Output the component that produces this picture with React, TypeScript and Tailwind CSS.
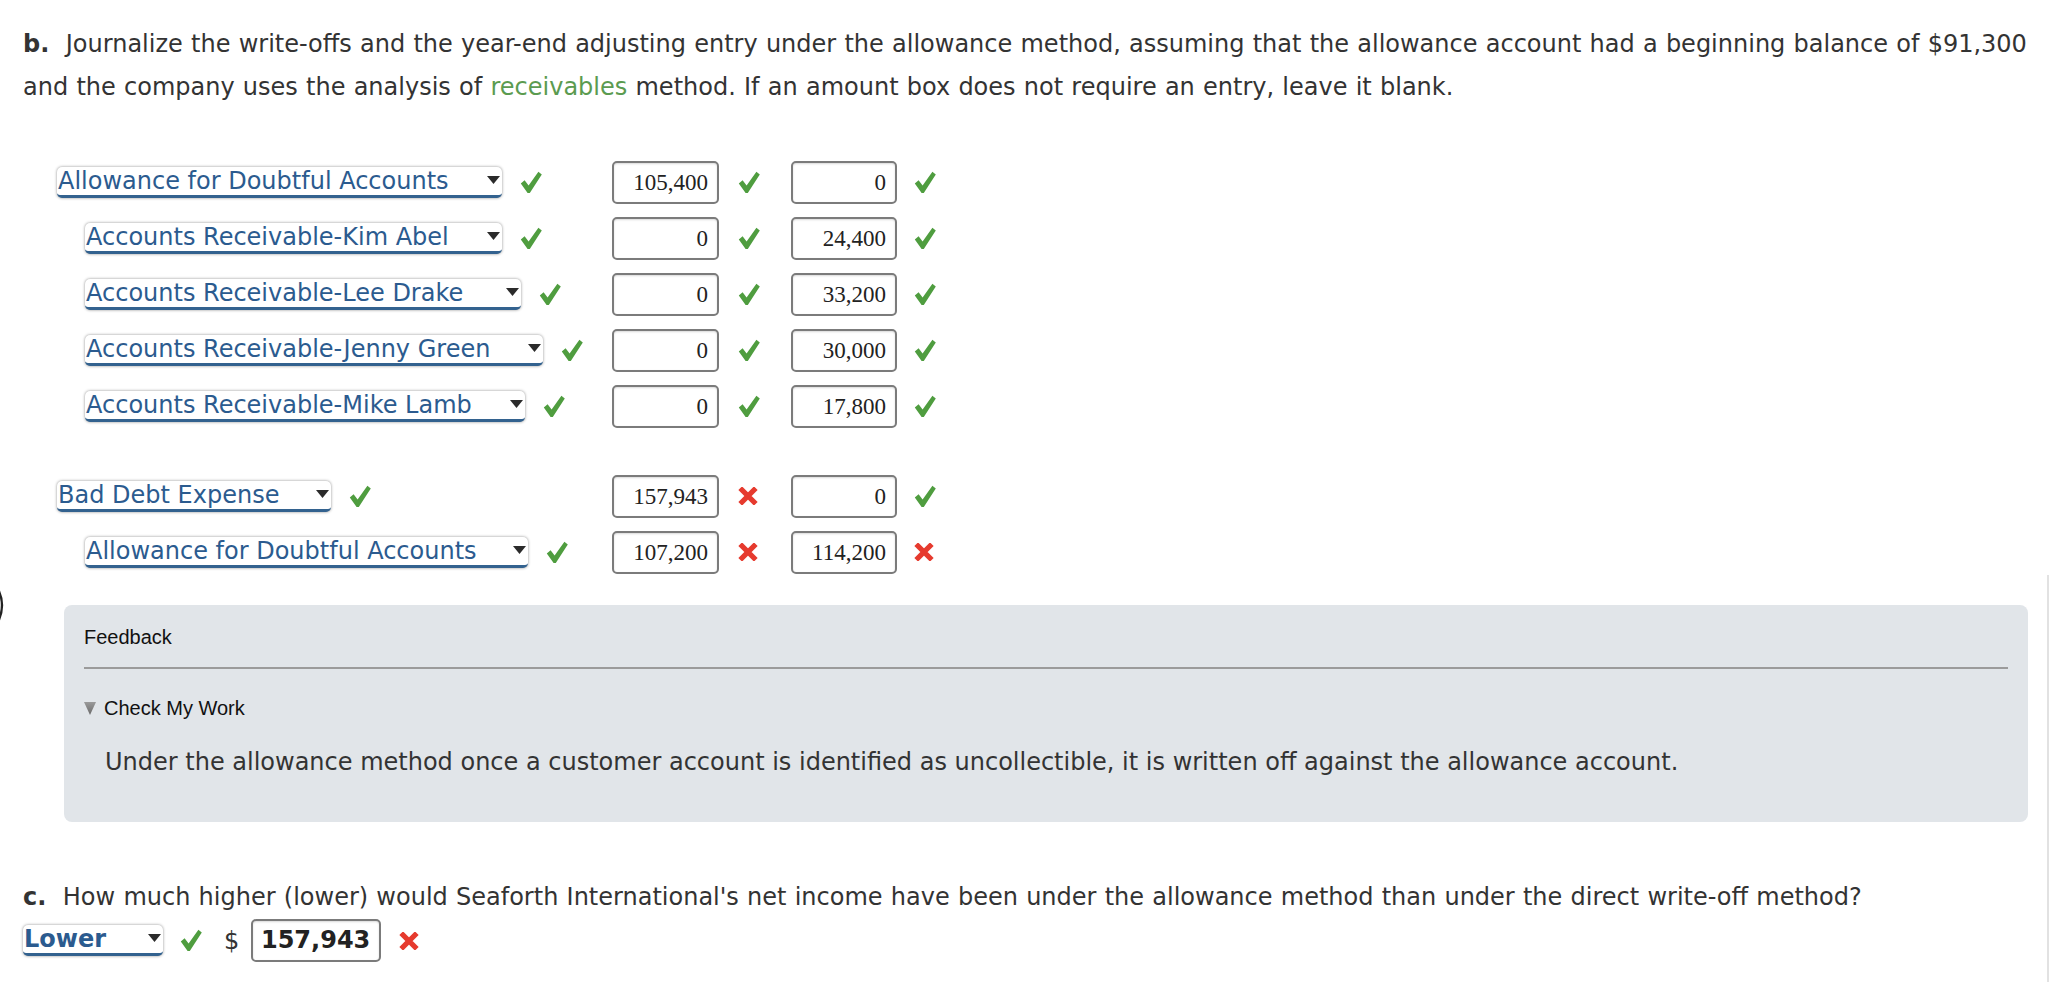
import React from "react";

function Check() {
  return (
    <svg width="22" height="23" viewBox="0 0 22 23" className="shrink-0">
      <path d="M0.8 12.6 L4.6 9.2 L8.6 14.4 L18.4 0.8 L21.8 3.6 L9.8 22 L7.6 22 Z" fill="#4f9d3f" />
    </svg>
  );
}

function Cross() {
  return (
    <svg width="20" height="18" viewBox="0 0 20 18" className="shrink-0">
      <path d="M2.2 1.2 L17.8 16.8 M17.8 1.2 L2.2 16.8" stroke="#e63a2e" strokeWidth="5.2" strokeLinecap="butt" />
    </svg>
  );
}

function Arrow() {
  return (
    <svg width="13" height="8" viewBox="0 0 13 8" className="absolute right-[2px] top-[9px]">
      <path d="M0 0 L13 0 L6.5 8 Z" fill="#2b2b2b" />
    </svg>
  );
}

function Select({ label, cls, bold }: { label: string; cls: string; bold?: boolean }) {
  return (
    <div
      className={
        "relative h-[31px] bg-white rounded-[5px] shadow-[0_0_3px_rgba(0,0,0,0.45)] border-b-[3px] border-[#33628f] text-[24px] leading-[29px] text-[#2b5b8f] whitespace-nowrap overflow-hidden " +
        cls +
        (bold ? " font-bold" : "")
      }
    >
      <span className="pl-[1px]">{label}</span>
      <Arrow />
    </div>
  );
}

function Box({ v, cls }: { v: string; cls?: string }) {
  return (
    <div
      className={
        "h-[43px] border-2 border-[#7b7b7b] rounded-[5px] bg-white shadow-[inset_0_1px_2px_rgba(0,0,0,0.15)] text-right pr-[9px] leading-[39px] text-[#222] " +
        (cls ?? "")
      }
    >
      {v}
    </div>
  );
}

type RowT = {
  label: string;
  cls: string;
  indent: boolean;
  d: string;
  dOk: boolean;
  c: string;
  cOk: boolean;
  extra?: string;
};

const rows: RowT[] = [
  { label: "Allowance for Doubtful Accounts", cls: "w-[445px]", indent: false, d: "105,400", dOk: true, c: "0", cOk: true },
  { label: "Accounts Receivable-Kim Abel", cls: "w-[417px]", indent: true, d: "0", dOk: true, c: "24,400", cOk: true },
  { label: "Accounts Receivable-Lee Drake", cls: "w-[436px]", indent: true, d: "0", dOk: true, c: "33,200", cOk: true },
  { label: "Accounts Receivable-Jenny Green", cls: "w-[458px]", indent: true, d: "0", dOk: true, c: "30,000", cOk: true },
  { label: "Accounts Receivable-Mike Lamb", cls: "w-[440px]", indent: true, d: "0", dOk: true, c: "17,800", cOk: true },
  { label: "Bad Debt Expense", cls: "w-[274px]", indent: false, d: "157,943", dOk: false, c: "0", cOk: true, extra: "mt-[34px]" },
  { label: "Allowance for Doubtful Accounts", cls: "w-[443px]", indent: true, d: "107,200", dOk: false, c: "114,200", cOk: false },
];

export default function App() {
  return (
    <div className="relative w-[2052px] h-[982px] bg-white overflow-hidden font-['DejaVu_Sans',Verdana,sans-serif] text-[#333]">
      <svg width="8" height="36" viewBox="0 0 8 36" className="absolute left-0 top-[588px]">
        <path d="M-2 1 Q6 17 -2 34" stroke="#222" strokeWidth="2.4" fill="none" />
      </svg>
      <div className="absolute right-[3px] top-[575px] w-[2px] h-[407px] bg-[#e2e2e2]" />

      <div className="pl-[23px] pt-[23px]">
        <p className="text-[24px] leading-[43px] whitespace-nowrap [word-spacing:0.6px]">
          <b className="text-[#333]">b.</b>&nbsp; Journalize the write-offs and the year-end adjusting entry under the allowance method, assuming that the allowance account had a beginning balance of $91,300
          <br />
          and the company uses the analysis of <span className="text-[#5b9b50]">receivables</span> method. If an amount box does not require an entry, leave it blank.
        </p>

        <div className="mt-[45px] ml-[34px]">
          {rows.map((r, i) => (
            <div key={i} className={"flex items-center h-[56px] " + (r.extra ?? "")}>
              <div className={"w-[555px] flex items-center gap-[18px] " + (r.indent ? "pl-[28px]" : "")}>
                <Select label={r.label} cls={r.cls} />
                <Check />
              </div>
              <Box v={r.d} cls="w-[107px] font-['Liberation_Serif',serif] text-[23px]" />
              <div className="w-[72px] pl-[19px] flex items-center">{r.dOk ? <Check /> : <Cross />}</div>
              <Box v={r.c} cls="w-[106px] font-['Liberation_Serif',serif] text-[23px]" />
              <div className="pl-[17px] flex items-center">{r.cOk ? <Check /> : <Cross />}</div>
            </div>
          ))}
        </div>

        <div className="mt-[25px] ml-[41px] w-[1964px] h-[217px] bg-[#e1e5e9] rounded-[8px] pt-[20px] px-[20px]">
          <div className="font-['Liberation_Sans',Arial,sans-serif] text-[20px] leading-[24px] text-[#111]">Feedback</div>
          <div className="mt-[18px] h-[2px] bg-[#9b9b9b]" />
          <div className="mt-[27px] flex items-center h-[24px] font-['Liberation_Sans',Arial,sans-serif] text-[20px] leading-[24px] text-[#111]">
            <svg width="13" height="14" viewBox="0 0 13 14" className="mr-[7px]">
              <defs>
                <linearGradient id="tg" x1="0" y1="0" x2="0" y2="1">
                  <stop offset="0" stopColor="#9a9a9a" />
                  <stop offset="1" stopColor="#6a6a6a" />
                </linearGradient>
              </defs>
              <path d="M0 1 L12 1 L6 14 Z" fill="url(#tg)" />
            </svg>
            Check My Work
          </div>
          <p className="mt-[26px] pl-[21px] text-[24px] leading-[32px] text-[#333]">
            Under the allowance method once a customer account is identified as uncollectible, it is written off against the allowance account.
          </p>
        </div>

        <p className="mt-[54px] text-[24px] leading-[43px] whitespace-nowrap [word-spacing:0.6px]">
          <b>c.</b>&nbsp; How much higher (lower) would Seaforth International's net income have been under the allowance method than under the direct write-off method?
        </p>
        <div className="flex items-center h-[43px]">
          <Select label="Lower" cls="w-[140px]" bold />
          <div className="ml-[17px]"><Check /></div>
          <span className="ml-[22px] text-[24px]">$</span>
          <Box v="157,943" cls="ml-[12px] w-[130px] text-[24px] font-bold h-[42px] leading-[38px]" />
          <div className="ml-[18px]"><Cross /></div>
        </div>
      </div>
    </div>
  );
}
